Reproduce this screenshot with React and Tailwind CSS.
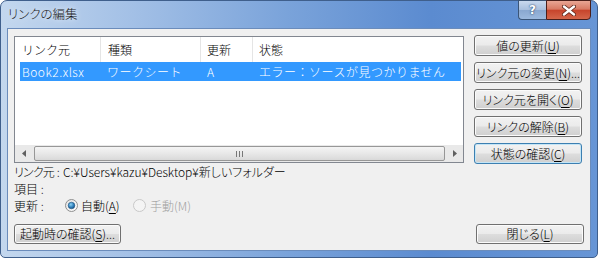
import React from 'react';

const jp = "font-['Noto_Sans_CJK_JP',sans-serif] font-light";
const palt = "[font-feature-settings:'palt']";

// Win7 push button
const Btn = ({ children, def = false, className = '' }) => (
  <div
    className={`flex items-center justify-center rounded-[3px] border ${
      def
        ? 'border-[#3c7fb1] shadow-[inset_0_0_0_1px_#c4e5f6]'
        : 'border-[#707070] shadow-[inset_0_0_0_1px_#fbfbfb]'
    } bg-[linear-gradient(#f2f2f2_0%,#ebebeb_48%,#dddddd_52%,#cfcfcf_100%)] text-[12px] leading-none text-black ${palt} ${className}`}
  >
    {children}
  </div>
);

const U = ({ children }) => <span className="underline underline-offset-[2px]">{children}</span>;

const Radio = ({ checked = false, disabled = false }) => (
  <svg width="13" height="13" viewBox="0 0 13 13">
    <defs>
      <linearGradient id="rb" x1="0" y1="0" x2="1" y2="1">
        <stop offset="0" stopColor="#e0e0e0" />
        <stop offset="1" stopColor="#ffffff" />
      </linearGradient>
      <radialGradient id="rd" cx="0.4" cy="0.35" r="0.7">
        <stop offset="0" stopColor="#8cd2f5" />
        <stop offset="0.6" stopColor="#2f7fba" />
        <stop offset="1" stopColor="#164c7c" />
      </radialGradient>
    </defs>
    <circle cx="6.5" cy="6.5" r="6" fill={disabled ? '#f4f4f4' : 'url(#rb)'} stroke={disabled ? '#c8c8c8' : '#8e8f8f'} />
    {checked && <circle cx="6.5" cy="6.5" r="3.3" fill="url(#rd)" stroke="#1d5281" strokeWidth="0.6" />}
  </svg>
);

export default function App() {
  return (
    <div className={`${jp} flex h-[258px] w-[598px] flex-col rounded-t-[7px] rounded-b-[5px] border border-[#3f5f8c] bg-[linear-gradient(to_right,#c3d7ee_0%,#a3c0e6_22%,#7aa3da_48%,#5b8bd0_72%,#6795d5_100%)]`}>
      {/* title bar */}
      <div className="flex h-[27px] shrink-0 items-start justify-between pl-[7px] pr-[6px]">
        <div className={`mt-[4px] text-[12.5px] leading-[18px] text-[#1b1b1b] ${palt} [text-shadow:0_0_6px_rgba(255,255,255,0.9)]`}>
          リンクの編集
        </div>
        <div className="-mt-[1px] flex h-[20px]">
          <div className="flex w-[28px] items-center justify-center rounded-bl-[4px] border border-r-0 border-[#3b5577] bg-[linear-gradient(#c9d9ee_0%,#a9c0de_48%,#8aa8d0_52%,#9cb9de_100%)]">
            <span className="font-['DejaVu_Sans',sans-serif] text-[12px] font-bold leading-none text-white [text-shadow:0_0_2px_#2c4a70,0_0_1px_#2c4a70]">?</span>
          </div>
          <div className="flex w-[45px] items-center justify-center rounded-br-[4px] border border-[#4a1f1a] bg-[linear-gradient(#e9a694_0%,#d87a64_45%,#c7452c_52%,#d4664a_100%)]">
            <svg width="14" height="11" viewBox="0 0 14 11">
              <path d="M2 1.5 L12 9.5 M12 1.5 L2 9.5" stroke="#5a2418" strokeWidth="4" strokeLinecap="round" />
              <path d="M2 1.5 L12 9.5 M12 1.5 L2 9.5" stroke="#ffffff" strokeWidth="2.4" strokeLinecap="round" />
            </svg>
          </div>
        </div>
      </div>

      {/* client area */}
      <div className="mx-[6px] mb-[6px] flex flex-1 flex-col border border-[#6b8cbb] bg-[#f0f0f0] pl-[6px] pr-[6px] pt-[6px] pb-[6px]">
        <div className="flex gap-[10px]">
          <div className="flex w-[450px] flex-col">
            {/* list view */}
            <div className="mt-[1px] flex h-[127px] flex-col border border-[#828790] bg-white">
              <div className="flex h-[25px] shrink-0 items-stretch text-[12px] leading-none text-black">
                <div className="flex w-[86px] items-center border-r border-[#e5e5e5] pl-[7px]">リンク元</div>
                <div className="flex w-[100px] items-center border-r border-[#e5e5e5] pl-[7px]">種類</div>
                <div className="flex w-[52px] items-center border-r border-[#e5e5e5] pl-[6px]">更新</div>
                <div className="flex flex-1 items-center pl-[6px]">状態</div>
              </div>
              <div className="ml-[5px] mr-[2px] flex h-[19px] shrink-0 items-center bg-[#3399ff] text-[12px] leading-none text-white">
                <div className="w-[81px] pl-[2px] tracking-[0.5px]">Book2.xlsx</div>
                <div className="w-[100px] pl-[6px] tracking-[0.5px]">ワークシート</div>
                <div className="w-[52px] pl-[6px]">A</div>
                <div className="flex-1 whitespace-nowrap pl-[6px] tracking-[0.5px]">エラー：ソースが見つかりません</div>
              </div>
              <div className="flex-1" />
              {/* horizontal scrollbar */}
              <div className="flex h-[17px] shrink-0 bg-[#e9e9e9]">
                <div className="flex w-[17px] items-center justify-center">
                  <svg width="4" height="7" viewBox="0 0 4 7"><path d="M4 0 L0 3.5 L4 7 Z" fill="#606060" /></svg>
                </div>
                <div className="flex-1 py-[1px] pl-[2px] pr-[1px]">
                  <div className="flex h-full items-center justify-center gap-[2px] rounded-[2px] border border-[#979797] bg-[linear-gradient(#f4f4f4_0%,#e8e8e8_50%,#d9d9d9_100%)]">
                    <div className="h-[6px] w-[1px] bg-[#777]" />
                    <div className="h-[6px] w-[1px] bg-[#777]" />
                    <div className="h-[6px] w-[1px] bg-[#777]" />
                  </div>
                </div>
                <div className="flex w-[17px] items-center justify-center">
                  <svg width="4" height="7" viewBox="0 0 4 7"><path d="M0 0 L4 3.5 L0 7 Z" fill="#606060" /></svg>
                </div>
              </div>
            </div>

            {/* details */}
            <div className={`text-[12px] leading-[17px] text-black ${palt}`}>
              <div className="flex whitespace-nowrap">
                <span className="w-[49px] shrink-0">
                  <span className="tracking-[-0.8px]">リンク元</span> :
                </span>
                <span>C:¥Users¥kazu¥Desktop¥新しいフォルダー</span>
              </div>
              <div>項目 :</div>
              <div className="flex items-center">
                <span className="w-[51px] shrink-0">更新 :</span>
                <div className="flex w-[68px] items-center">
                  <Radio checked />
                  <span className="ml-[3px]">自動(<U>A</U>)</span>
                </div>
                <div className="flex items-center text-[#a0a0a0]">
                  <Radio disabled />
                  <span className="ml-[4px]">手動(M)</span>
                </div>
              </div>
            </div>
          </div>

          {/* right buttons */}
          <div className="flex w-[108px] flex-col gap-[6px]">
            <Btn className="h-[21px]">値の更新(<U>U</U>)</Btn>
            <Btn className="h-[21px]">リンク元の変更(<U>N</U>)...</Btn>
            <Btn className="h-[21px]">リンク元を開く(<U>O</U>)</Btn>
            <Btn className="h-[21px]">リンクの解除(<U>B</U>)</Btn>
            <Btn def className="h-[21px]">状態の確認(<U>C</U>)</Btn>
          </div>
        </div>

        <div className="mt-auto flex justify-between">
          <Btn className="h-[20px] w-[107px]">起動時の確認(<U>S</U>)...</Btn>
          <Btn className="h-[20px] w-[108px]">閉じる(<U>L</U>)</Btn>
        </div>
      </div>
    </div>
  );
}
